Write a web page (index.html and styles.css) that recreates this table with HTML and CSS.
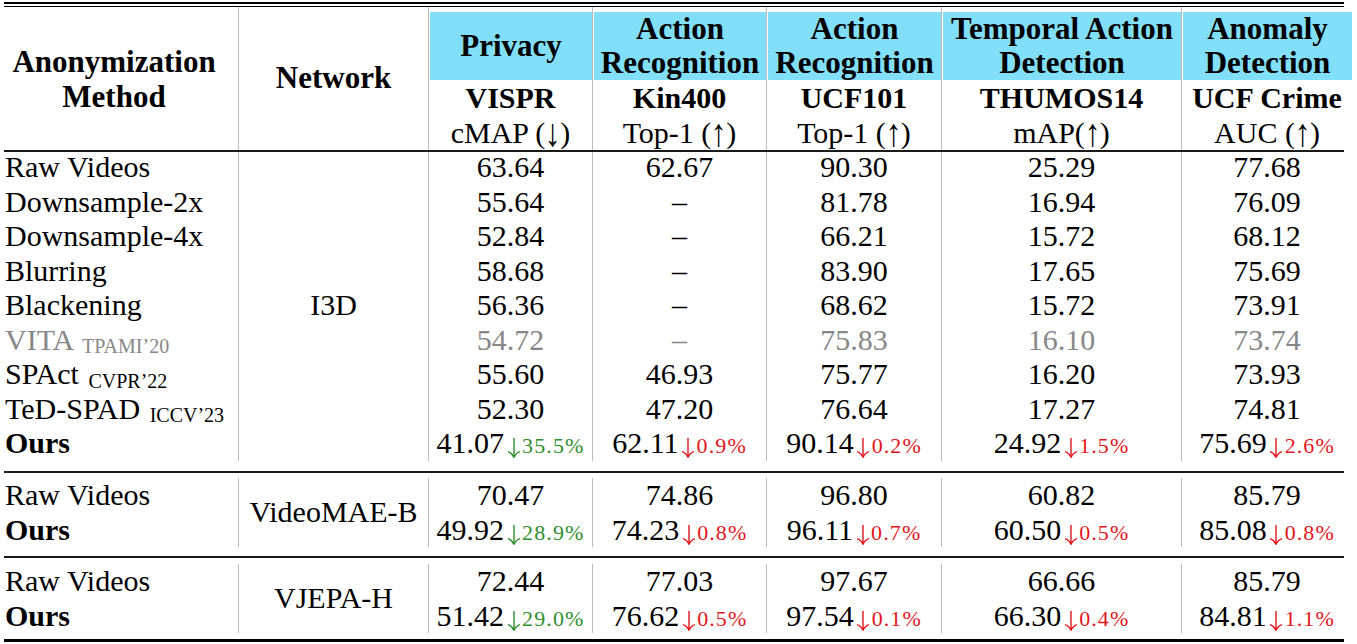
FILE: index.html
```html
<!DOCTYPE html>
<html>
<head>
<meta charset="utf-8">
<link rel="stylesheet" href="styles.css">
</head>
<body>
<div class="table">
  <div class="rule-double"></div>

  <div class="grid head">
    <div class="hcell method"><span>Anonymization<br>Method</span></div>
    <div class="hcell net vline">Network</div>
    <div class="hcell task vline">
      <div class="cyan">Privacy</div>
      <div class="ds">VISPR</div>
      <div class="metric">cMAP (<span class="ha">↓</span>)</div>
    </div>
    <div class="hcell task vline">
      <div class="cyan">Action<br>Recognition</div>
      <div class="ds">Kin400</div>
      <div class="metric">Top-1 (<span class="ha">↑</span>)</div>
    </div>
    <div class="hcell task vline">
      <div class="cyan">Action<br>Recognition</div>
      <div class="ds">UCF101</div>
      <div class="metric">Top-1 (<span class="ha">↑</span>)</div>
    </div>
    <div class="hcell task vline">
      <div class="cyan">Temporal Action<br>Detection</div>
      <div class="ds">THUMOS14</div>
      <div class="metric">mAP(<span class="ha">↑</span>)</div>
    </div>
    <div class="hcell task vline">
      <div class="cyan">Anomaly<br>Detection</div>
      <div class="ds">UCF Crime</div>
      <div class="metric">AUC (<span class="ha">↑</span>)</div>
    </div>
  </div>

  <div class="rule rule-mid"></div>

  <div class="grid sec sec1">
    <div class="m">Raw Videos</div>
    <div class="netcell vline span9">I3D</div>
    <div class="n vline">63.64</div><div class="n vline">62.67</div><div class="n vline">90.30</div><div class="n vline">25.29</div><div class="n vline">77.68</div>

    <div class="m">Downsample-2x</div>
    <div class="n vline">55.64</div><div class="n vline">–</div><div class="n vline">81.78</div><div class="n vline">16.94</div><div class="n vline">76.09</div>

    <div class="m">Downsample-4x</div>
    <div class="n vline">52.84</div><div class="n vline">–</div><div class="n vline">66.21</div><div class="n vline">15.72</div><div class="n vline">68.12</div>

    <div class="m">Blurring</div>
    <div class="n vline">58.68</div><div class="n vline">–</div><div class="n vline">83.90</div><div class="n vline">17.65</div><div class="n vline">75.69</div>

    <div class="m">Blackening</div>
    <div class="n vline">56.36</div><div class="n vline">–</div><div class="n vline">68.62</div><div class="n vline">15.72</div><div class="n vline">73.91</div>

    <div class="m grey">VITA <span class="venue">TPAMI’20</span></div>
    <div class="n vline grey">54.72</div><div class="n vline grey">–</div><div class="n vline grey">75.83</div><div class="n vline grey">16.10</div><div class="n vline grey">73.74</div>

    <div class="m">SPAct <span class="venue">CVPR’22</span></div>
    <div class="n vline">55.60</div><div class="n vline">46.93</div><div class="n vline">75.77</div><div class="n vline">16.20</div><div class="n vline">73.93</div>

    <div class="m">TeD-SPAD <span class="venue">ICCV’23</span></div>
    <div class="n vline">52.30</div><div class="n vline">47.20</div><div class="n vline">76.64</div><div class="n vline">17.27</div><div class="n vline">74.81</div>

    <div class="m b">Ours</div>
    <div class="n vline">41.07<svg class="arr g" viewBox="0 0 14 20" width="14" height="20"><path d="M7 0V19.3M7 19.5C5.8 16.6 3.8 14.6 1 13.6M7 19.5C8.2 16.6 10.2 14.6 13 13.6"/></svg><span class="pct g">35.5%</span></div>
    <div class="n vline">62.11<svg class="arr r" viewBox="0 0 14 20" width="14" height="20"><path d="M7 0V19.3M7 19.5C5.8 16.6 3.8 14.6 1 13.6M7 19.5C8.2 16.6 10.2 14.6 13 13.6"/></svg><span class="pct r">0.9%</span></div>
    <div class="n vline">90.14<svg class="arr r" viewBox="0 0 14 20" width="14" height="20"><path d="M7 0V19.3M7 19.5C5.8 16.6 3.8 14.6 1 13.6M7 19.5C8.2 16.6 10.2 14.6 13 13.6"/></svg><span class="pct r">0.2%</span></div>
    <div class="n vline">24.92<svg class="arr r" viewBox="0 0 14 20" width="14" height="20"><path d="M7 0V19.3M7 19.5C5.8 16.6 3.8 14.6 1 13.6M7 19.5C8.2 16.6 10.2 14.6 13 13.6"/></svg><span class="pct r">1.5%</span></div>
    <div class="n vline">75.69<svg class="arr r" viewBox="0 0 14 20" width="14" height="20"><path d="M7 0V19.3M7 19.5C5.8 16.6 3.8 14.6 1 13.6M7 19.5C8.2 16.6 10.2 14.6 13 13.6"/></svg><span class="pct r">2.6%</span></div>
  </div>

  <div class="rule"></div>

  <div class="grid sec sec2">
    <div class="m">Raw Videos</div>
    <div class="netcell vline span2">VideoMAE-B</div>
    <div class="n vline">70.47</div><div class="n vline">74.86</div><div class="n vline">96.80</div><div class="n vline">60.82</div><div class="n vline">85.79</div>

    <div class="m b">Ours</div>
    <div class="n vline">49.92<svg class="arr g" viewBox="0 0 14 20" width="14" height="20"><path d="M7 0V19.3M7 19.5C5.8 16.6 3.8 14.6 1 13.6M7 19.5C8.2 16.6 10.2 14.6 13 13.6"/></svg><span class="pct g">28.9%</span></div>
    <div class="n vline">74.23<svg class="arr r" viewBox="0 0 14 20" width="14" height="20"><path d="M7 0V19.3M7 19.5C5.8 16.6 3.8 14.6 1 13.6M7 19.5C8.2 16.6 10.2 14.6 13 13.6"/></svg><span class="pct r">0.8%</span></div>
    <div class="n vline">96.11<svg class="arr r" viewBox="0 0 14 20" width="14" height="20"><path d="M7 0V19.3M7 19.5C5.8 16.6 3.8 14.6 1 13.6M7 19.5C8.2 16.6 10.2 14.6 13 13.6"/></svg><span class="pct r">0.7%</span></div>
    <div class="n vline">60.50<svg class="arr r" viewBox="0 0 14 20" width="14" height="20"><path d="M7 0V19.3M7 19.5C5.8 16.6 3.8 14.6 1 13.6M7 19.5C8.2 16.6 10.2 14.6 13 13.6"/></svg><span class="pct r">0.5%</span></div>
    <div class="n vline">85.08<svg class="arr r" viewBox="0 0 14 20" width="14" height="20"><path d="M7 0V19.3M7 19.5C5.8 16.6 3.8 14.6 1 13.6M7 19.5C8.2 16.6 10.2 14.6 13 13.6"/></svg><span class="pct r">0.8%</span></div>
  </div>

  <div class="rule"></div>

  <div class="grid sec sec3">
    <div class="m">Raw Videos</div>
    <div class="netcell vline span2">VJEPA-H</div>
    <div class="n vline">72.44</div><div class="n vline">77.03</div><div class="n vline">97.67</div><div class="n vline">66.66</div><div class="n vline">85.79</div>

    <div class="m b">Ours</div>
    <div class="n vline">51.42<svg class="arr g" viewBox="0 0 14 20" width="14" height="20"><path d="M7 0V19.3M7 19.5C5.8 16.6 3.8 14.6 1 13.6M7 19.5C8.2 16.6 10.2 14.6 13 13.6"/></svg><span class="pct g">29.0%</span></div>
    <div class="n vline">76.62<svg class="arr r" viewBox="0 0 14 20" width="14" height="20"><path d="M7 0V19.3M7 19.5C5.8 16.6 3.8 14.6 1 13.6M7 19.5C8.2 16.6 10.2 14.6 13 13.6"/></svg><span class="pct r">0.5%</span></div>
    <div class="n vline">97.54<svg class="arr r" viewBox="0 0 14 20" width="14" height="20"><path d="M7 0V19.3M7 19.5C5.8 16.6 3.8 14.6 1 13.6M7 19.5C8.2 16.6 10.2 14.6 13 13.6"/></svg><span class="pct r">0.1%</span></div>
    <div class="n vline">66.30<svg class="arr r" viewBox="0 0 14 20" width="14" height="20"><path d="M7 0V19.3M7 19.5C5.8 16.6 3.8 14.6 1 13.6M7 19.5C8.2 16.6 10.2 14.6 13 13.6"/></svg><span class="pct r">0.4%</span></div>
    <div class="n vline">84.81<svg class="arr r" viewBox="0 0 14 20" width="14" height="20"><path d="M7 0V19.3M7 19.5C5.8 16.6 3.8 14.6 1 13.6M7 19.5C8.2 16.6 10.2 14.6 13 13.6"/></svg><span class="pct r">1.1%</span></div>
  </div>

  <div class="rule rule-bottom"></div>
</div>
</body>
</html>
```

FILE: styles.css
```css
html, body {
  margin: 0;
  padding: 0;
  background: #ffffff;
}

body {
  font-family: "Liberation Serif", "Times New Roman", serif;
  font-size: 30px;
  color: #000000;
}

.table {
  width: 1348px;
  margin-left: 4px;
  padding-top: 2px;
}

.rule-double {
  width: 1340px;
  height: 2px;
  border-top: 2px solid #000;
  border-bottom: 1px solid #000;
}

.rule {
  width: 1340px;
  height: 2px;
  background: #1a1a1a;
}

.rule-mid {
  position: relative;
  z-index: 1;
}

.rule-bottom {
  height: 3px;
  background: #000;
}

.grid {
  display: grid;
  grid-template-columns: 234px 190px 164px 174px 175px 240px 171px;
}

.vline {
  border-left: 1px solid #bdbdbd;
}

/* header */
.head {
  height: 143px;
}

.hcell {
  font-weight: bold;
  text-align: center;
  white-space: nowrap;
}

.method {
  display: flex;
  align-items: center;
  justify-content: center;
  padding-right: 14px;
  padding-top: 2px;
  line-height: 34.5px;
  font-size: 31px;
}

.net {
  display: flex;
  align-items: center;
  justify-content: center;
  line-height: 34.5px;
  font-size: 31px;
}

.task {
  display: flex;
  flex-direction: column;
  padding-top: 5px;
}

.cyan {
  height: 68px;
  margin-left: 1px;
  background: #82dffa;
  display: flex;
  align-items: center;
  justify-content: center;
  line-height: 34.5px;
  font-size: 31px;
}

.ds {
  line-height: 35px;
}

.metric {
  line-height: 35px;
  font-weight: normal;
}

.ha {
  display: inline-block;
  transform: scale(1.05, 1.3);
}

/* body sections */
.sec {
  grid-auto-rows: 34.5px;
  line-height: 34.5px;
}

.sec1 {
  margin-top: -2px;
  margin-bottom: 10.5px;
}

.sec2 {
  padding-top: 5px;
  padding-bottom: 9px;
}

.sec3 {
  padding-top: 6px;
  padding-bottom: 6px;
}

.m {
  padding-left: 1px;
  white-space: nowrap;
}

.b {
  font-weight: bold;
}

.n {
  text-align: center;
  white-space: nowrap;
}

.netcell {
  grid-column: 2;
  display: flex;
  align-items: center;
  justify-content: center;
}

.span9 {
  grid-row: 1 / span 9;
}

.span2 {
  grid-row: 1 / span 2;
}

.grey {
  color: #878787;
}

.venue {
  font-size: 20px;
  vertical-align: -3.5px;
  margin-left: 2px;
}

.arr {
  width: 14px;
  height: 20px;
  vertical-align: -5px;
  margin-left: 2.5px;
  margin-right: 1.5px;
}

.arr path {
  fill: none;
  stroke: currentColor;
  stroke-width: 1.4;
}

.pct {
  font-size: 22px;
  letter-spacing: 1.1px;
}

.g {
  color: #2f8f2f;
}

.r {
  color: #e3161c;
}
```
